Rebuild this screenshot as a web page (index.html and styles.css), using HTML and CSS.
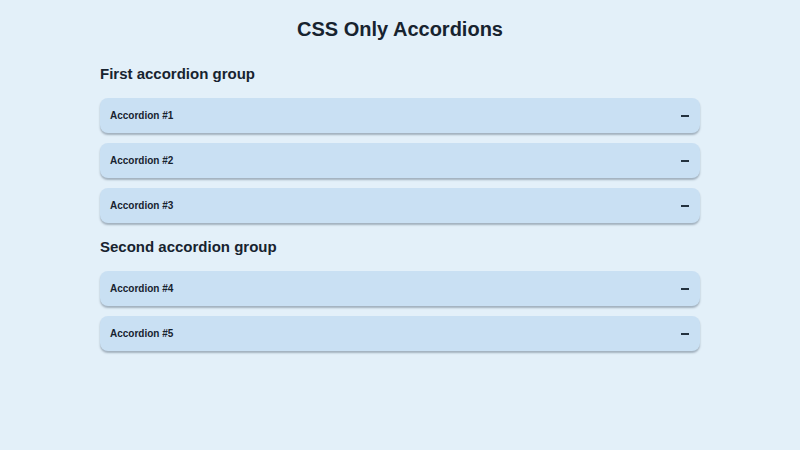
FILE: index.html
```html
<!DOCTYPE html>
<html>
<head>
<meta charset="utf-8">
<link rel="stylesheet" href="styles.css">
</head>
<body>
<main class="wrap">
  <h1 class="title">CSS Only Accordions</h1>
  <section class="group first">
    <h2 class="group-title">First accordion group</h2>
    <div class="list">
      <div class="item"><span>Accordion #1</span><i class="minus"></i></div>
      <div class="item"><span>Accordion #2</span><i class="minus"></i></div>
      <div class="item"><span>Accordion #3</span><i class="minus"></i></div>
    </div>
  </section>
  <section class="group">
    <h2 class="group-title">Second accordion group</h2>
    <div class="list">
      <div class="item"><span>Accordion #4</span><i class="minus"></i></div>
      <div class="item"><span>Accordion #5</span><i class="minus"></i></div>
    </div>
  </section>
</main>
</body>
</html>
```
FILE: styles.css
```css
html, body {
  margin: 0;
  height: 100%;
}
body {
  background: #e3f0f9;
  font-family: "Liberation Sans", Arial, sans-serif;
  color: #17232f;
}
.wrap {
  width: 600px;
  margin: 0 auto;
  padding-top: 15px;
}
.title {
  margin: 0;
  font-size: 20px;
  line-height: 28px;
  text-align: center;
  font-weight: bold;
}
.group {
  margin-top: 13px;
}
.group.first {
  margin-top: 20px;
}
.group-title {
  margin: 0 0 13px;
  font-size: 15px;
  line-height: 22px;
  font-weight: bold;
}
.list {
  display: flex;
  flex-direction: column;
  gap: 10px;
}
.item {
  height: 35px;
  box-sizing: border-box;
  padding: 0 10px;
  display: flex;
  align-items: center;
  justify-content: space-between;
  background: #c9e0f3;
  border-radius: 8px;
  box-shadow: 0 2px 2px rgba(40, 60, 80, 0.35);
  font-size: 10px;
  font-weight: bold;
}
.minus {
  display: block;
  width: 8px;
  height: 2px;
  background: #24323f;
  margin-right: 1px;
}
```
